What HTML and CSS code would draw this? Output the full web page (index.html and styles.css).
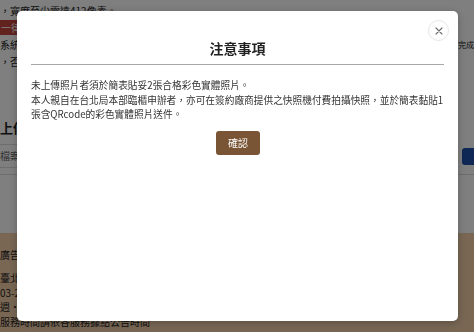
FILE: index.html
```html
<!DOCTYPE html>
<html lang="zh-Hant">
<head>
<meta charset="utf-8">
<link rel="stylesheet" href="styles.css">
</head>
<body>
<div class="page">
  <div class="notes">
    <p class="note">，寬度至少需達412像素。</p>
    <p class="note"><span class="red">一律</span></p>
    <p class="note split"><span>系統會</span><span class="right">完成</span></p>
    <p class="note">，否則</p>
  </div>
  <h2 class="upload-title">上傳</h2>
  <div class="upload-row">
    <div class="file-input">檔案</div>
    <div class="blue-btn"></div>
  </div>
  <div class="spacer"></div>
  <footer class="footer">
    <p class="f-head">廣告</p>
    <p class="f-line">臺北市</p>
    <p class="f-line">03-28</p>
    <p class="f-line">週・需</p>
    <p class="f-line">服務時間請依各服務據點公告時間</p>
  </footer>
</div>

<div class="overlay"></div>

<div class="modal">
  <button class="close" aria-label="close">
    <svg width="8" height="8" viewBox="0 0 8 8"><path d="M1 1L7 7M7 1L1 7" stroke="#6b6b6b" stroke-width="1.1" stroke-linecap="round"/></svg>
  </button>
  <h1 class="title">注意事項</h1>
  <hr class="rule">
  <div class="body">
    <p>未上傳照片者須於簡表貼妥2張合格彩色實體照片。</p>
    <p>本人親自在台北局本部臨櫃申辦者，亦可在簽約廠商提供之快照機付費拍攝快照，並於簡表黏貼1張含QRcode的彩色實體照片送件。</p>
  </div>
  <div class="actions">
    <button class="ok">確認</button>
  </div>
</div>
</body>
</html>
```

FILE: styles.css
```css
* { box-sizing: border-box; }
html, body { margin: 0; padding: 0; }
body {
  width: 474px;
  height: 332px;
  overflow: hidden;
  font-family: "Noto Sans CJK TC", "Noto Sans", sans-serif;
  background: #fff;
  color: #222;
}
.page {
  display: flex;
  flex-direction: column;
  height: 332px;
}
.notes { padding: 2px 0 0 0; }
.note {
  margin: 0;
  font-size: 10px;
  line-height: 17px;
  color: #222;
}
.note.split {
  display: flex;
  justify-content: space-between;
}
.note .right { font-size: 8px; }
.red {
  color: #fff;
  background: #c4473f;
  padding: 0 1px;
}
.upload-title {
  margin: 48px 0 0 0;
  font-size: 13px;
  font-weight: 700;
  line-height: 20px;
}
.upload-row {
  display: flex;
  justify-content: space-between;
  align-items: center;
  margin-top: 6px;
  border-bottom: 1px solid #ddd;
  padding-bottom: 6px;
}
.file-input {
  font-size: 10px;
  color: #666;
  border: 1px solid #ddd;
  border-left: 0;
  height: 24px;
  line-height: 22px;
  width: 120px;
  padding-left: 0;
}
.blue-btn {
  width: 12px;
  height: 17px;
  background: #1e4fa8;
  border-radius: 3px 0 0 3px;
}
.spacer { height: 58px; }
.footer {
  flex: 1;
  background: #f2cfa9;
  padding: 12px 0 0 0;
}
.footer p { margin: 0; font-size: 10px; color: #222; }
.f-head { line-height: 20px; margin-bottom: 6px !important; }
.f-line { line-height: 14.5px; }

.overlay {
  position: fixed;
  inset: 0;
  background: rgba(0, 0, 0, 0.5);
}
.modal {
  position: fixed;
  left: 17px;
  top: 11px;
  width: 441px;
  height: 310px;
  background: #fff;
  border-radius: 5px;
  padding: 0 14px;
  box-shadow: 0 2px 8px rgba(0,0,0,0.25);
}
.close {
  position: absolute;
  right: 9px;
  top: 9px;
  width: 21px;
  height: 21px;
  border-radius: 50%;
  border: 1px solid #e6e6e6;
  background: #fff;
  padding: 0;
  display: flex;
  align-items: center;
  justify-content: center;
}
.title {
  margin: 0;
  padding-top: 27px;
  text-align: center;
  font-size: 14px;
  line-height: 20px;
  font-weight: 700;
  color: #222;
}
.rule {
  margin: 6px 0 0 0;
  border: 0;
  border-top: 1px solid #a8a8a8;
  height: 0;
}
.body {
  margin-top: 13px;
  font-size: 9.7px;
  line-height: 14.5px;
  color: #333;
}
.body p { margin: 0; }
.actions {
  display: flex;
  justify-content: center;
  margin-top: 9px;
}
.ok {
  width: 44px;
  height: 24px;
  background: #7a5535;
  color: #fff;
  border: 0;
  border-radius: 3px;
  font-family: "Noto Sans CJK TC", sans-serif;
  font-size: 10px;
  padding: 0;
  margin-left: 1px;
}
```
